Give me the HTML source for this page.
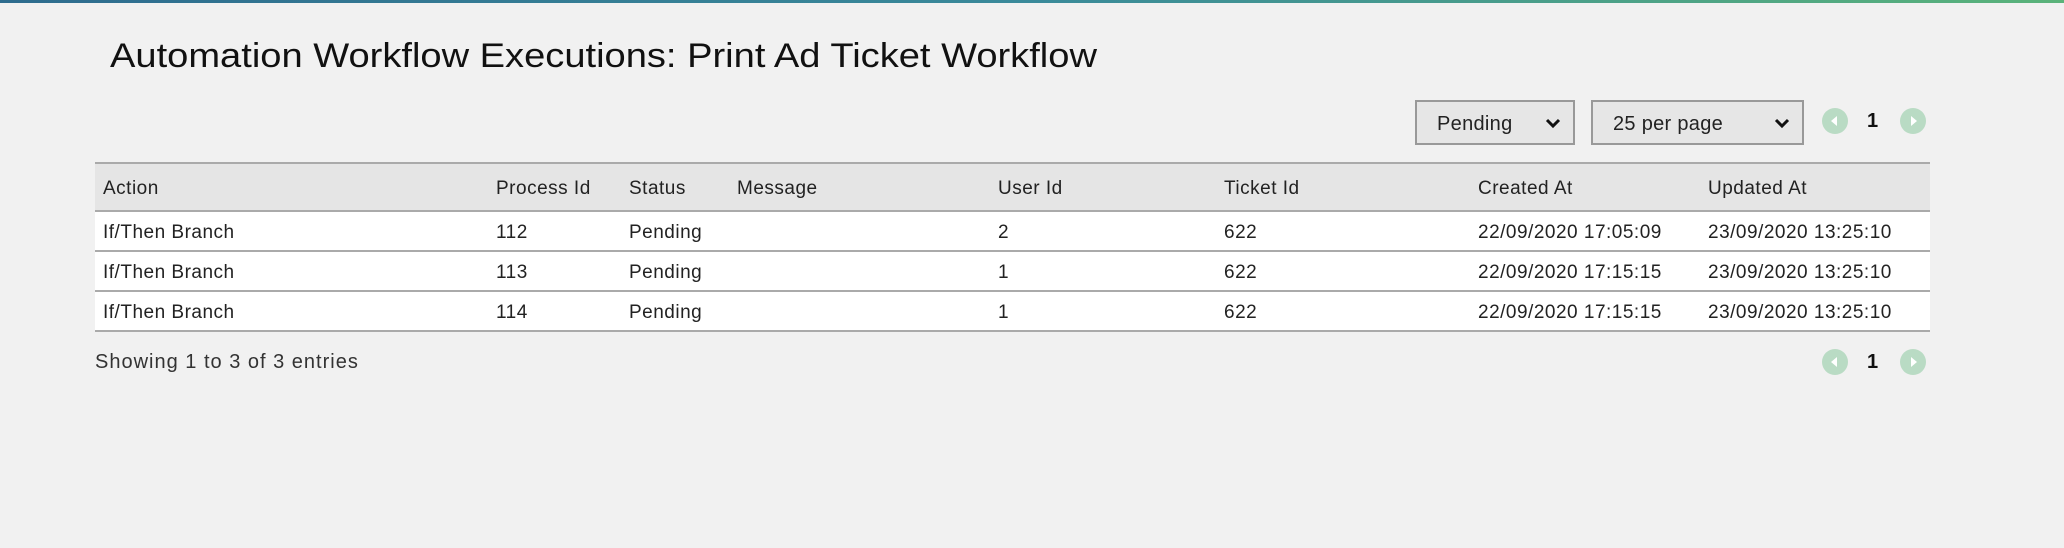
<!DOCTYPE html>
<html><head><style>
*{margin:0;padding:0;box-sizing:border-box}
body{width:2064px;height:548px;background:#f1f1f1;font-family:"Liberation Sans",sans-serif;color:#222;position:relative;overflow:hidden}
.bar{position:absolute;top:0;left:0;width:2064px;height:3px;background:linear-gradient(90deg,#2e6c8e,#3a8a9a 50%,#5ab37a)}
h1{position:absolute;left:110px;top:37px;font-size:34px;font-weight:normal;color:#111;transform:scaleX(1.12);transform-origin:left top;white-space:nowrap}
.sel{position:absolute;top:100px;height:45px;border:2px solid #999;background:#e6e6e6;font-size:20px;padding:11px 0 0 20px;letter-spacing:0.3px}
.sel svg{position:absolute;right:12px;top:15px}
.circ{position:absolute;width:26px;height:26px;border-radius:50%;background:#b9dbc4}
.circ:after{content:"";position:absolute;top:8px;border:5px solid transparent}
.l:after{border-right-color:#fff;border-width:5px 6px 5px 0;left:9px}
.r:after{border-left-color:#fff;border-width:5px 0 5px 6px;left:11px}
.pn{position:absolute;font-size:20px;font-weight:bold;color:#111}
table{position:absolute;left:95px;top:162px;width:1835px;border-collapse:collapse;font-size:19px;letter-spacing:0.5px}
th{font-weight:normal;text-align:left;background:#e5e5e5;height:48px;border-top:2px solid #aaa;border-bottom:2px solid #aaa;padding:4px 0 0 8px}
td{background:#fff;height:40px;border-bottom:2px solid #aaa;padding:3px 0 0 8px}
.info{position:absolute;left:95px;top:351px;font-size:20px;color:#333;letter-spacing:1px}
</style></head><body>
<div class="bar"></div>
<h1>Automation Workflow Executions: Print Ad Ticket Workflow</h1>
<div class="sel" style="left:1415px;width:160px">Pending<svg width="16" height="12" viewBox="0 0 16 12"><path d="M2 3l6 6 6-6" stroke="#111" stroke-width="3" fill="none"/></svg></div>
<div class="sel" style="left:1591px;width:213px">25 per page<svg width="16" height="12" viewBox="0 0 16 12"><path d="M2 3l6 6 6-6" stroke="#111" stroke-width="3" fill="none"/></svg></div>
<div class="circ l" style="left:1822px;top:108px"></div>
<div class="pn" style="left:1867px;top:110px">1</div>
<div class="circ r" style="left:1900px;top:108px"></div>
<table>
<colgroup><col style="width:393px"><col style="width:133px"><col style="width:108px"><col style="width:261px"><col style="width:226px"><col style="width:254px"><col style="width:230px"><col></colgroup>
<tr><th>Action</th><th>Process Id</th><th>Status</th><th>Message</th><th>User Id</th><th>Ticket Id</th><th>Created At</th><th>Updated At</th></tr>
<tr><td>If/Then Branch</td><td>112</td><td>Pending</td><td></td><td>2</td><td>622</td><td>22/09/2020 17:05:09</td><td>23/09/2020 13:25:10</td></tr>
<tr><td>If/Then Branch</td><td>113</td><td>Pending</td><td></td><td>1</td><td>622</td><td>22/09/2020 17:15:15</td><td>23/09/2020 13:25:10</td></tr>
<tr><td>If/Then Branch</td><td>114</td><td>Pending</td><td></td><td>1</td><td>622</td><td>22/09/2020 17:15:15</td><td>23/09/2020 13:25:10</td></tr>
</table>
<div class="info">Showing 1 to 3 of 3 entries</div>
<div class="circ l" style="left:1822px;top:349px"></div>
<div class="pn" style="left:1867px;top:351px">1</div>
<div class="circ r" style="left:1900px;top:349px"></div>
</body></html>
